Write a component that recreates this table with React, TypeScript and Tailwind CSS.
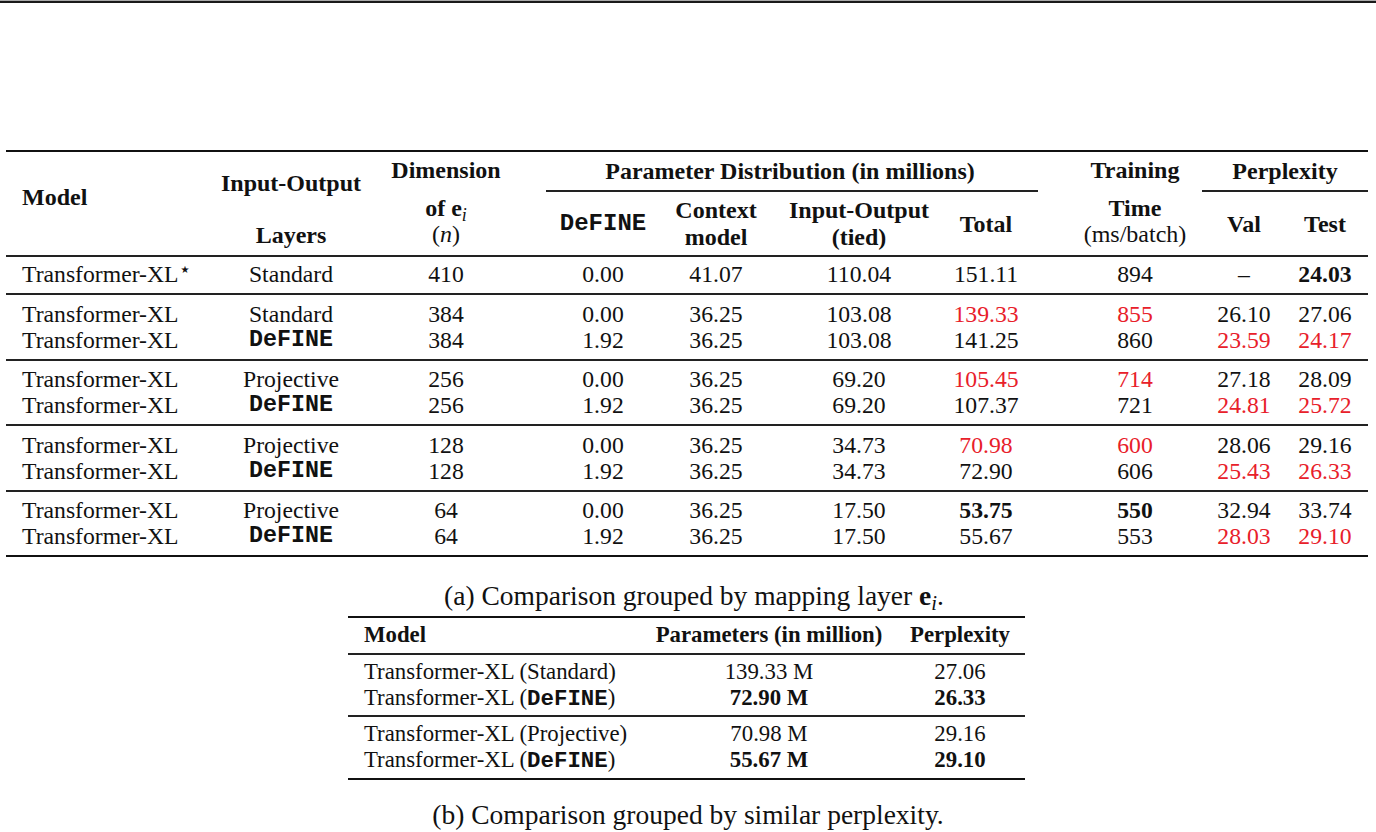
import React from 'react';

type Cell = string | { t: string; c?: 'r' | 'b' };

const RED = 'text-[#e8202a]';

function Val({ v }: { v: Cell }) {
  if (typeof v === 'string') return <span>{v}</span>;
  if (v.c === 'r') return <span className={RED}>{v.t}</span>;
  return <span className="font-bold">{v.t}</span>;
}

function C({ children, col }: { children: React.ReactNode; col: string }) {
  return <div className={`${col} flex justify-center whitespace-nowrap`}>{children}</div>;
}

function Define() {
  return <span className="font-['Liberation_Mono',monospace] font-bold text-[23.3px]">DeFINE</span>;
}

const COLS = 'grid grid-cols-[214px_142px_168px_146px_80px_206px_48px_40px_170px_48px_14px_86px]';

type Row = [React.ReactNode, React.ReactNode, string, string, string, string, Cell, Cell, Cell, Cell];

function BodyRow({ r }: { r: Row }) {
  return (
    <div className={`${COLS} h-[26px] leading-[26px]`}>
      <div className="col-start-1 pl-[16px] whitespace-nowrap">{r[0]}</div>
      <C col="col-start-2">{r[1]}</C>
      <C col="col-start-3">{r[2]}</C>
      <C col="col-start-4">{r[3]}</C>
      <C col="col-start-5">{r[4]}</C>
      <C col="col-start-6">{r[5]}</C>
      <C col="col-start-7"><Val v={r[6]} /></C>
      <C col="col-start-9"><Val v={r[7]} /></C>
      <C col="col-start-10"><Val v={r[8]} /></C>
      <C col="col-start-12"><Val v={r[9]} /></C>
    </div>
  );
}

const R = (t: string): Cell => ({ t, c: 'r' });
const B = (t: string): Cell => ({ t, c: 'b' });

const groups: Row[][] = [
  [
    ['Transformer-XL', 'Standard', '384', '0.00', '36.25', '103.08', R('139.33'), R('855'), '26.10', '27.06'],
    ['Transformer-XL', <Define />, '384', '1.92', '36.25', '103.08', '141.25', '860', R('23.59'), R('24.17')],
  ],
  [
    ['Transformer-XL', 'Projective', '256', '0.00', '36.25', '69.20', R('105.45'), R('714'), '27.18', '28.09'],
    ['Transformer-XL', <Define />, '256', '1.92', '36.25', '69.20', '107.37', '721', R('24.81'), R('25.72')],
  ],
  [
    ['Transformer-XL', 'Projective', '128', '0.00', '36.25', '34.73', R('70.98'), R('600'), '28.06', '29.16'],
    ['Transformer-XL', <Define />, '128', '1.92', '36.25', '34.73', '72.90', '606', R('25.43'), R('26.33')],
  ],
  [
    ['Transformer-XL', 'Projective', '64', '0.00', '36.25', '17.50', B('53.75'), B('550'), '32.94', '33.74'],
    ['Transformer-XL', <Define />, '64', '1.92', '36.25', '17.50', '55.67', '553', R('28.03'), R('29.10')],
  ],
];

function Ei() {
  return (
    <span>
      <span className="font-bold">e</span>
      <sub className="italic font-normal">i</sub>
    </span>
  );
}

function TopTable() {
  return (
    <div className="ml-[6px] w-[1362px] text-[23.7px]">
      <div className="h-[2px] bg-[#111]" />
      {/* header */}
      <div className={`${COLS} grid-rows-[38px_2px_63px] text-[24px] font-bold`}>
        <div className="col-start-1 row-start-1 row-span-3 pl-[16px] pt-[32px] leading-[26px]">Model</div>
        <div className="col-start-2 row-start-1 row-span-3 flex flex-col items-center pt-[18px] leading-[26px] whitespace-nowrap">
          <div>Input-Output</div>
          <div className="mt-[26px]">Layers</div>
        </div>
        <div className="col-start-3 row-start-1 row-span-3 flex flex-col items-center pt-[5px] leading-[26px] whitespace-nowrap">
          <div>Dimension</div>
          <div className="mt-[12px]">
            of <Ei />
          </div>
          <div className="font-normal">
            (<i>n</i>)
          </div>
        </div>
        <div className="col-start-4 col-span-5 row-start-1 flex items-center justify-center whitespace-nowrap">
          Parameter Distribution (in millions)
        </div>
        <div className="col-start-4 col-span-5 row-start-2 ml-[16px] mr-[12px] bg-[#222]" />
        <div className="col-start-9 row-start-1 row-span-3 flex flex-col items-center pt-[5px] leading-[26px] whitespace-nowrap">
          <div>Training</div>
          <div className="mt-[12px]">Time</div>
          <div className="font-normal">(ms/batch)</div>
        </div>
        <div className="col-start-10 col-span-3 row-start-1 -ml-[18px] flex items-center justify-center">Perplexity</div>
        <div className="col-start-10 col-span-3 row-start-2 -ml-[18px] bg-[#222]" />
        <div className="col-start-4 row-start-3 flex items-center justify-center">
          <span className="font-['Liberation_Mono',monospace] font-bold text-[24px]">DeFINE</span>
        </div>
        <div className="col-start-5 row-start-3 flex flex-col items-center justify-center leading-[27px] whitespace-nowrap">
          <div>Context</div>
          <div>model</div>
        </div>
        <div className="col-start-6 row-start-3 flex flex-col items-center justify-center leading-[27px] whitespace-nowrap">
          <div>Input-Output</div>
          <div>(tied)</div>
        </div>
        <div className="col-start-7 row-start-3 flex items-center justify-center">Total</div>
        <div className="col-start-10 row-start-3 flex items-center justify-center">Val</div>
        <div className="col-start-12 row-start-3 flex items-center justify-center">Test</div>
      </div>
      <div className="h-[2px] bg-[#222]" />
      <div className="pt-[4px] pb-[6px]">
        <BodyRow
          r={[
            <span>
              Transformer-XL
              <span className="relative -top-[9px] ml-[2px] text-[10px] leading-none font-['DejaVu_Sans',sans-serif]">★</span>
            </span>,
            'Standard',
            '410',
            '0.00',
            '41.07',
            '110.04',
            '151.11',
            '894',
            '–',
            B('24.03'),
          ]}
        />
      </div>
      {groups.map((g, i) => (
        <div key={i}>
          <div className="h-[2px] bg-[#222]" />
          <div className="pt-[5.5px] pb-[6px]">
            {g.map((r, j) => (
              <BodyRow key={j} r={r} />
            ))}
          </div>
        </div>
      ))}
      <div className="h-[2px] bg-[#111]" />
    </div>
  );
}

const BCOLS = 'grid grid-cols-[312px_218px_17px_130px]';

function BRow({ a, b, c }: { a: React.ReactNode; b: Cell; c: Cell }) {
  return (
    <div className={`${BCOLS} h-[26px] leading-[26px]`}>
      <div className="col-start-1 pl-[16px] whitespace-nowrap">{a}</div>
      <C col="col-start-2"><Val v={b} /></C>
      <C col="col-start-4"><Val v={c} /></C>
    </div>
  );
}

function DefineSm() {
  return <span className="font-['Liberation_Mono',monospace] font-bold text-[22.4px]">DeFINE</span>;
}

function BottomTable() {
  return (
    <div className="ml-[348px] w-[677px] text-[22.8px]">
      <div className="h-[2px] bg-[#111]" />
      <div className={`${BCOLS} h-[35px] items-center font-bold`}>
        <div className="col-start-1 pl-[16px]">Model</div>
        <C col="col-start-2">Parameters (in million)</C>
        <C col="col-start-4">Perplexity</C>
      </div>
      <div className="h-[2px] bg-[#222]" />
      <div className="pt-[4px] pb-[4px]">
        <BRow a="Transformer-XL (Standard)" b="139.33 M" c="27.06" />
        <BRow
          a={
            <span>
              Transformer-XL (<DefineSm />)
            </span>
          }
          b={B('72.90 M')}
          c={B('26.33')}
        />
      </div>
      <div className="h-[2px] bg-[#222]" />
      <div className="pt-[4px] pb-[5px]">
        <BRow a="Transformer-XL (Projective)" b="70.98 M" c="29.16" />
        <BRow
          a={
            <span>
              Transformer-XL (<DefineSm />)
            </span>
          }
          b={B('55.67 M')}
          c={B('29.10')}
        />
      </div>
      <div className="h-[2px] bg-[#111]" />
    </div>
  );
}

export default function App() {
  return (
    <div className="w-[1376px] h-[832px] bg-white text-[#111] font-['Liberation_Serif',serif] overflow-hidden">
      <div className="h-[1px] bg-[#aaa]" />
      <div className="h-[2px] bg-[#1a1a1a]" />
      <div className="h-[147px]" />
      <TopTable />
      <div className="mt-[23px] text-center text-[27.5px] leading-[32px] pl-[12px]">
        (a) Comparison grouped by mapping layer{' '}
        <span>
          <span className="font-bold">e</span>
          <sub className="italic">i</sub>
        </span>
        .
      </div>
      <div className="mt-[4px]">
        <BottomTable />
      </div>
      <div className="mt-[19px] text-center text-[27.5px] leading-[32px]">(b) Comparison grouped by similar perplexity.</div>
    </div>
  );
}
